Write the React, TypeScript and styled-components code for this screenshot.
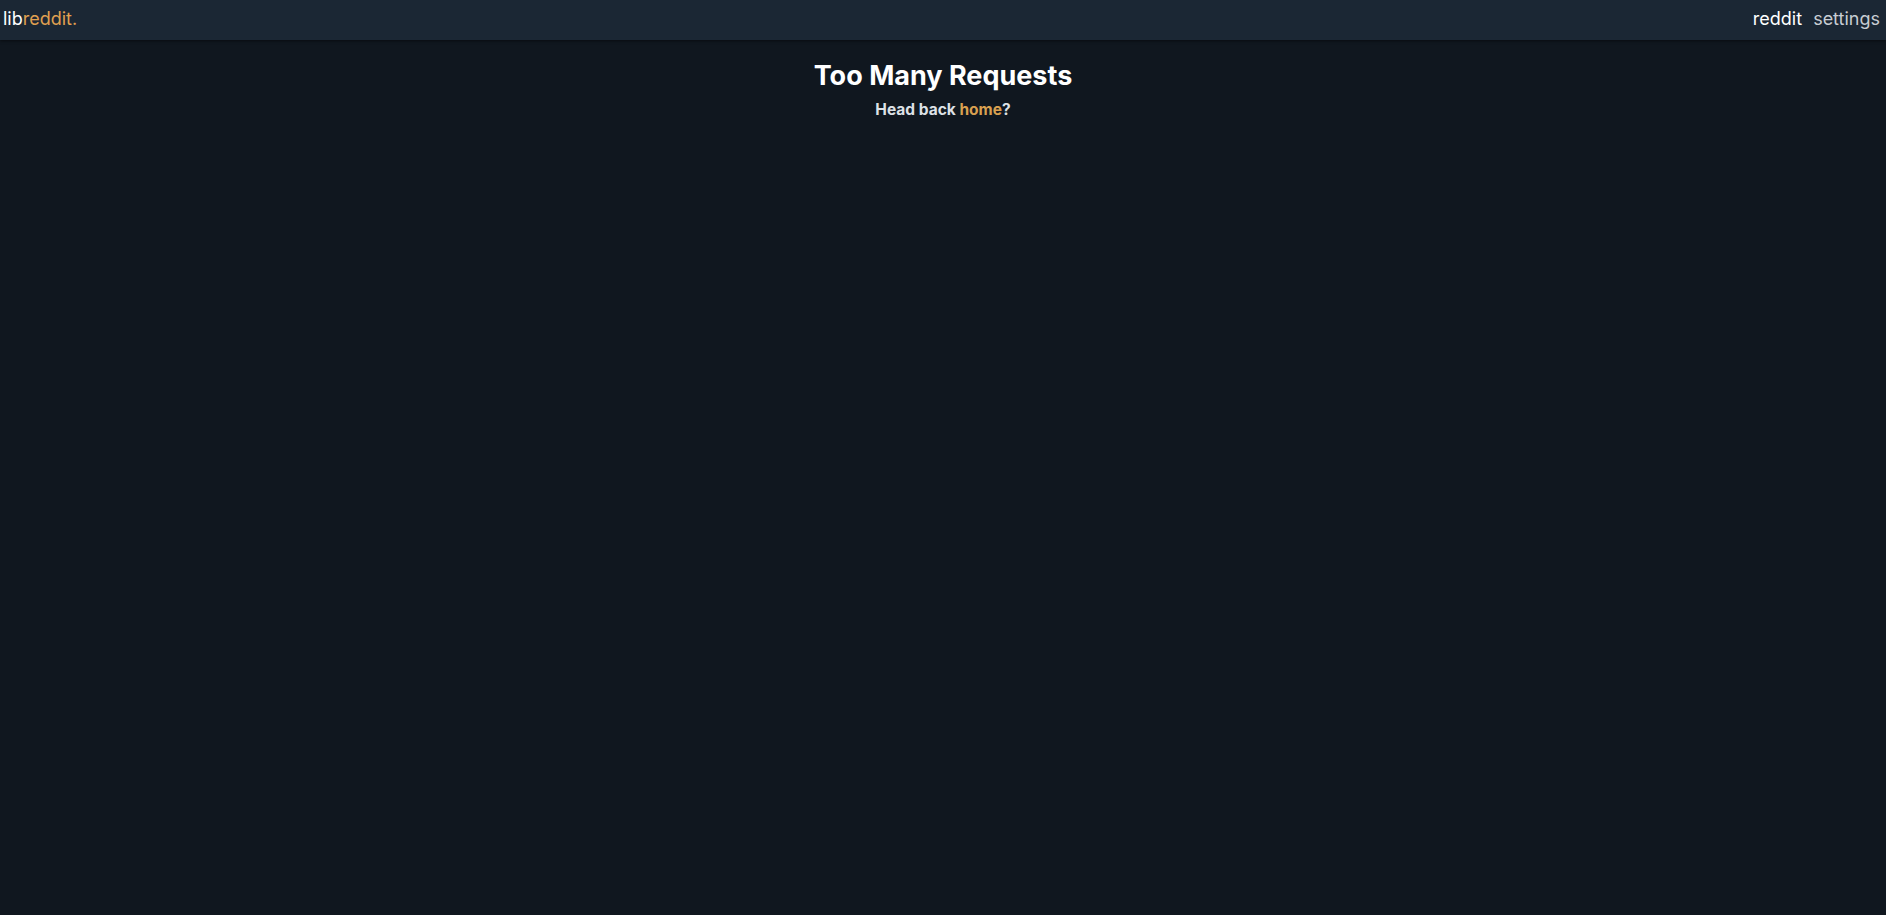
import styled, { createGlobalStyle } from 'styled-components';

const GlobalStyle = createGlobalStyle`
  html, body {
    margin: 0;
    padding: 0;
    height: 100%;
    background-color: #10171f;
  }
  body {
    font-family: Inter, "Noto Sans", sans-serif;
    color: #ffffff;
  }
  #root {
    min-height: 100%;
  }
`;

const Nav = styled.nav`
  box-sizing: border-box;
  display: flex;
  justify-content: space-between;
  align-items: center;
  height: 40px;
  padding: 0 6px 4px 3px;
  background-color: #1b2734;
  box-shadow: 0 1px 3px rgba(0, 0, 0, 0.5);
  font-size: 18px;
`;

const Logo = styled.a`
  color: #ffffff;
  text-decoration: none;
`;

const Accent = styled.span`
  color: #e0a050;
`;

const NavLinks = styled.div`
  display: flex;
  align-items: center;
  gap: 11px;
`;

const NavLink = styled.a<{ muted?: boolean }>`
  color: ${props => props.muted ? '#c8cdd3' : '#ffffff'};
  text-decoration: none;
`;

const Main = styled.main`
  display: flex;
  flex-direction: column;
  align-items: center;
  padding-top: 15px;
`;

const Title = styled.h1`
  margin: 0;
  font-size: 27px;
  font-weight: 700;
  line-height: 42px;
`;

const Subtitle = styled.h3`
  margin: 2px 0 0;
  font-size: 15.5px;
  font-weight: 700;
  color: #dde1e6;
  line-height: 22px;
`;

const HomeLink = styled.a`
  color: #d9a050;
  text-decoration: none;
`;

export default function App() {
  return (
    <>
      <GlobalStyle />
      <Nav>
        <Logo href="#">lib<Accent>reddit.</Accent></Logo>
        <NavLinks>
          <NavLink href="#">reddit</NavLink>
          <NavLink href="#" muted>settings</NavLink>
        </NavLinks>
      </Nav>
      <Main>
        <Title>Too Many Requests</Title>
        <Subtitle>Head back <HomeLink href="#">home</HomeLink>?</Subtitle>
      </Main>
    </>
  );
}
